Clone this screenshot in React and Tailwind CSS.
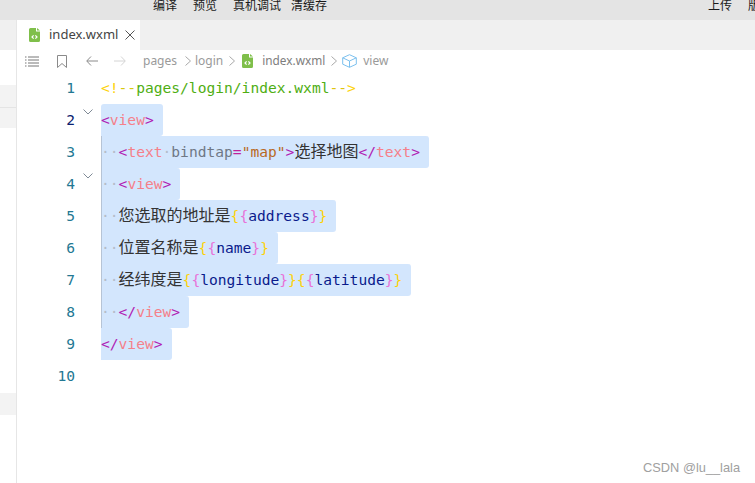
import React from 'react';

const TAG = 'text-[#b01cb4]';
const NAME = 'text-[#f5808a]';
const BRACE = 'text-[#fdd20a]';
const PINK = 'text-[#e872d8]';
const VAR = 'text-[#0a1a8c]';
const DOT = 'text-[#b4bdc9]';
const ATTR = 'text-[#6f7885]';
const CJK = 'cjk';

const ind = ['··', DOT];
const mustache = (name) => [
  ['{', BRACE],
  ['{', PINK],
  [name, VAR],
  ['}', PINK],
  ['}', BRACE],
];

const lines = [
  { n: 1, plain: true, tokens: [['<!', BRACE], ['--', 'text-[#d8c80c]'], ['pages/login/index.wxml', 'text-[#4fae12]'], ['--', 'text-[#e0c40c]'], ['>', BRACE]] },
  { n: 2, fold: true, first: true, tokens: [['<', TAG], ['view', NAME], ['>', TAG]] },
  {
    n: 3,
    guide: true,
    tokens: [
      ind,
      ['<', TAG],
      ['text', NAME],
      ['·', DOT],
      ['bindtap', ATTR],
      ['=', 'text-[#c0209c]'],
      ['"map"', 'text-[#b8691f]'],
      ['>', TAG],
      ['选择地图', CJK],
      ['</', TAG],
      ['text', NAME],
      ['>', TAG],
    ],
  },
  { n: 4, fold: true, guide: true, tokens: [ind, ['<', TAG], ['view', NAME], ['>', TAG]] },
  { n: 5, guide: true, tokens: [ind, ['您选取的地址是', CJK], ...mustache('address')] },
  { n: 6, guide: true, tokens: [ind, ['位置名称是', CJK], ...mustache('name')] },
  { n: 7, guide: true, tokens: [ind, ['经纬度是', CJK], ...mustache('longitude'), ...mustache('latitude')] },
  { n: 8, guide: true, tokens: [ind, ['</', TAG], ['view', NAME], ['>', TAG]] },
  { n: 9, tokens: [['</', TAG], ['view', NAME], ['>', TAG]] },
  { n: 10, plain: true, tokens: [] },
];

const FileIcon = () => (
  <svg width="11" height="14" viewBox="0 0 11 14" className="shrink-0">
    <path d="M1.5 0H7v3.5h4V12.5A1.5 1.5 0 0 1 9.5 14h-8A1.5 1.5 0 0 1 0 12.5v-11A1.5 1.5 0 0 1 1.5 0z" fill="#7fbf4a" />
    <path d="M8 0l3 2.6H8z" fill="#7fbf4a" />
    <path d="M4.6 7.4L3 9l1.6 1.6M6.4 7.4L8 9l-1.6 1.6" fill="none" stroke="#fff" strokeWidth="1.2" />
  </svg>
);

const Crumb = () => (
  <svg width="6" height="10" viewBox="0 0 6 10" className="shrink-0">
    <path d="M0.5 0.5L5.5 5L0.5 9.5" fill="none" stroke="#a8a8a8" />
  </svg>
);

const Chevron = () => (
  <svg width="10" height="6" viewBox="0 0 10 6" className="ml-2 mt-[5px] shrink-0">
    <path d="M0.5 0.5L5 5L9.5 0.5" fill="none" stroke="#7f8a96" />
  </svg>
);

const Row = ({ line }) => {
  const shape = line.first ? 'rounded-tl-[3px] rounded-r-[3px]' : 'rounded-r-[3px]';
  const guide = line.guide ? 'shadow-[inset_1px_0_0_#b6c4d6]' : '';
  const fill = line.plain ? '' : `bg-[#d3e6fd] pr-[9px] ${shape} ${guide}`;
  return (
    <div className="flex h-8">
      <div className={`w-[58px] text-right text-[14.6px] leading-8 ${line.n === 2 ? 'text-[#0b216f]' : 'text-[#237893]'}`}>
        {line.n}
      </div>
      <div className="w-[26px] shrink-0">{line.fold && <Chevron />}</div>
      <div className={`h-8 whitespace-pre text-[14.6px] leading-8 ${fill}`}>
        {line.tokens.map(([text, color], i) =>
          color === CJK ? (
            <span key={i} className="font-['Noto_Sans_CJK_SC',sans-serif] text-[16px] leading-none text-[#333333]">
              {text}
            </span>
          ) : (
            <span key={i} className={color}>
              {text}
            </span>
          )
        )}
      </div>
    </div>
  );
};

export default function App() {
  return (
    <div className="relative flex h-[483px] w-[755px] flex-col overflow-hidden bg-white font-['Noto_Sans','Noto_Sans_CJK_SC',sans-serif]">
      <div className="flex h-5 shrink-0 overflow-hidden whitespace-nowrap bg-[#e4e4e4] pl-[153px] text-[12px] leading-[12px] text-[#1a1a1a]">
        <div className="flex">
          <span>编译</span>
          <span className="ml-4">预览</span>
          <span className="ml-4">真机调试</span>
          <span className="ml-[10px]">清缓存</span>
          <span className="ml-[381px]">上传</span>
          <span className="ml-4">版本管理</span>
        </div>
      </div>

      <div className="flex min-h-0 flex-1">
        <div className="flex w-[17px] shrink-0 flex-col border-r border-[#e6e6e6]">
          <div className="h-[30px] bg-[#f0f0f0]" />
          <div className="mt-[35px] h-[22px] bg-[#f3f3f3]" />
          <div className="h-px bg-[#e4e4e4]" />
          <div className="h-5 bg-[#f3f3f3]" />
          <div className="mt-[265px] h-[22px] bg-[#f3f3f3]" />
        </div>

        <div className="flex min-w-0 flex-1 flex-col">
          <div className="flex h-[30px] shrink-0 bg-[#f0f0f0]">
            <div className="flex w-[123px] items-center bg-white pl-3 text-[13px] text-[#444444]">
              <FileIcon />
              <span className="ml-[9px]">index.wxml</span>
              <svg width="10" height="10" viewBox="0 0 10 10" className="ml-[7px]">
                <path d="M0.5 0.5L9.5 9.5M9.5 0.5L0.5 9.5" stroke="#555555" />
              </svg>
            </div>
          </div>

          <div className="flex h-[22px] shrink-0 items-center pl-2 text-[12px] text-[#9a9a9a]">
            <svg width="14" height="11" viewBox="0 0 14 11" className="shrink-0">
              <path d="M3 1h11M3 4h11M3 7h11M3 10h11" stroke="#777777" />
              <path d="M0 1h1.5M0 4h1.5M0 7h1.5M0 10h1.5" stroke="#777777" />
            </svg>
            <svg width="10" height="13" viewBox="0 0 10 13" className="ml-[18px] shrink-0">
              <path d="M0.5 0.5h9v12L5 8.5l-4.5 4z" fill="none" stroke="#8a8a8a" />
            </svg>
            <svg width="12" height="10" viewBox="0 0 12 10" className="ml-[19px] shrink-0">
              <path d="M12 5H1M5 0.5L0.7 5L5 9.5" fill="none" stroke="#8a8a8a" />
            </svg>
            <svg width="12" height="10" viewBox="0 0 12 10" className="ml-4 shrink-0">
              <path d="M0 5h11M7 0.5L11.3 5L7 9.5" fill="none" stroke="#d4d4d4" />
            </svg>
            <span className="ml-[17px]">pages</span>
            <span className="ml-2"><Crumb /></span>
            <span className="ml-[4px]">login</span>
            <span className="ml-[6px]"><Crumb /></span>
            <span className="ml-[7px]"><FileIcon /></span>
            <span className="ml-[9px] text-[11.8px] text-[#7d7d7d]">index.wxml</span>
            <span className="ml-[6px]"><Crumb /></span>
            <svg width="15" height="14" viewBox="0 0 15 14" className="ml-[5px] shrink-0">
              <path d="M7.5 0.7L14.3 3.8V10.2L7.5 13.3L0.7 10.2V3.8zM0.7 3.8L7.5 7L14.3 3.8M7.5 7V13.3" fill="none" stroke="#7cc0ee" />
            </svg>
            <span className="ml-[6px]">view</span>
          </div>

          <div className="font-['DejaVu_Sans_Mono',monospace]">
            {lines.map((line) => (
              <Row key={line.n} line={line} />
            ))}
          </div>
        </div>
      </div>

      <div className="absolute bottom-[7px] right-[15px] font-['Liberation_Sans',sans-serif] text-[12.8px] leading-4 text-[#a0a0a0]">
        CSDN @lu__lala
      </div>
    </div>
  );
}
